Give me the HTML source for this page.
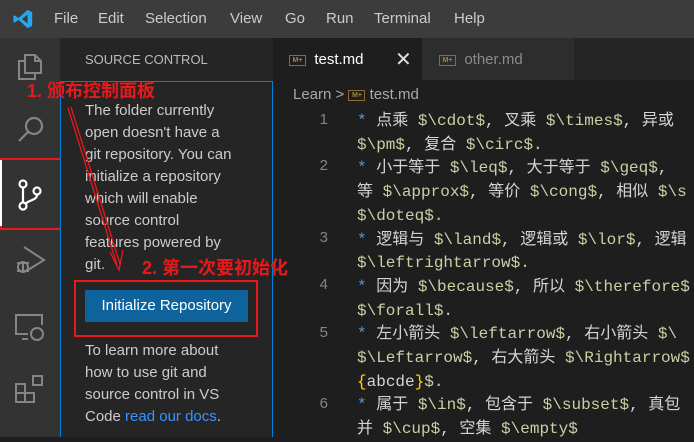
<!DOCTYPE html>
<html><head><meta charset="utf-8"><style>
*{margin:0;padding:0;box-sizing:border-box}
body{width:694px;height:437px;overflow:hidden;background:#1e1e1e;font-family:"Liberation Sans","Noto Sans CJK SC",sans-serif;position:relative}
.abs{position:absolute}
#title{left:0;top:0;width:694px;height:38px;background:#3c3c3c;color:#ccc;font-size:15px}
#title span{position:absolute;top:10px}
#act{left:0;top:38px;width:60px;height:399px;background:#333}
#side{left:60px;top:38px;width:213px;height:399px;background:#252526;color:#ccc}
.p{position:absolute;left:25px;font-size:15px;line-height:22px;color:#ccc;white-space:nowrap}
#tabs{left:273px;top:38px;width:421px;height:42px;background:#252526}
.mono{font-family:"Liberation Mono","Noto Sans CJK SC",monospace;font-size:16px;color:#d4d4d4;white-space:nowrap}
.m{color:#c5d2a3}.s{color:#569cd6}.y{color:#ffd700}
.ln{position:absolute;left:290px;width:38px;text-align:right;color:#858585;font-family:"Liberation Sans",sans-serif;font-size:15px}
.mdi{display:inline-block;width:17px;height:11px;border:1px solid #8a6c3c;color:#a5824b;font-size:7px;line-height:9px;text-align:center;font-weight:bold;vertical-align:middle}
.red{color:#e8191b;font-weight:bold;font-size:18px;font-family:"Liberation Sans","Noto Sans CJK SC",sans-serif}
</style></head><body>
<div id="title" class="abs">
<svg class="abs" style="left:12px;top:8px" width="22" height="22" viewBox="0 0 24 24"><path d="M17 2 L22 4.5 V19.5 L17 22 L7 13 L3 16 L1.5 15 V9 L3 8 L7 11 Z M17 7 L11 12 L17 17 Z" fill="#23a9f2"/></svg>
<span style="left:54px">File</span><span style="left:98px">Edit</span><span style="left:145px">Selection</span><span style="left:230px">View</span><span style="left:285px">Go</span><span style="left:326px">Run</span><span style="left:374px">Terminal</span><span style="left:454px">Help</span>
</div>
<div id="act" class="abs">
<svg class="abs" style="left:16px;top:14px" width="28" height="30" viewBox="0 0 28 30" fill="none" stroke="#858585" stroke-width="2"><path d="M9 3h10l6 6v12H9z M19 3v6h6"/><path d="M9 9H3v18h16v-6"/></svg>
<svg class="abs" style="left:16px;top:76px" width="30" height="30" viewBox="0 0 30 30" fill="none" stroke="#858585" stroke-width="2.2"><circle cx="18" cy="12" r="8"/><path d="M12 18L3 27"/></svg>
<div class="abs" style="left:0;top:120px;width:63px;height:72px;border:2px solid #e8191b"></div>
<div class="abs" style="left:0;top:122px;width:2px;height:66px;background:#fff"></div>
<svg class="abs" style="left:16px;top:140px" width="28" height="34" viewBox="0 0 28 34" fill="none" stroke="#fff" stroke-width="2.2"><circle cx="7" cy="6" r="3.5"/><circle cx="7" cy="28" r="3.5"/><circle cx="21" cy="13" r="3.5"/><path d="M7 10v14 M21 17c0 5-8 5-12 9"/></svg>
<svg class="abs" style="left:14px;top:206px" width="32" height="32" viewBox="0 0 32 32" fill="none" stroke="#858585" stroke-width="2"><path d="M10 3l20 13-16 10"/><circle cx="9" cy="23" r="5"/><path d="M3 19h12M3 27h12M9 18v10"/></svg>
<svg class="abs" style="left:14px;top:274px" width="32" height="30" viewBox="0 0 32 30" fill="none" stroke="#858585" stroke-width="2"><path d="M14 22H2V3h26v10M8 27h6"/><circle cx="23" cy="22" r="6"/></svg>
<svg class="abs" style="left:14px;top:336px" width="32" height="32" viewBox="0 0 32 32" fill="none" stroke="#858585" stroke-width="2"><rect x="2" y="10" width="9" height="9"/><rect x="2" y="19" width="9" height="9"/><rect x="11" y="19" width="9" height="9"/><rect x="19" y="2" width="9" height="9"/></svg>
</div>
<div id="side" class="abs">
<div class="abs" style="left:25px;top:14px;font-size:13px;color:#bbb">SOURCE CONTROL</div>
<div class="abs" style="left:0;top:43px;width:213px;height:356px;border:1px solid #007fd4;border-bottom:none"></div>
<div class="p" style="top:62px">The folder currently<br>open doesn't have a<br>git repository. You can<br>initialize a repository<br>which will enable<br>source control<br>features powered by<br>git.</div>
<div class="abs" style="left:14px;top:242px;width:184px;height:57px;border:2px solid #e8191b"></div>
<div class="abs" style="left:25px;top:252px;width:163px;height:32px;background:#0e639c;color:#fff;font-size:15px;text-align:center;line-height:32px">Initialize Repository</div>
<div class="p" style="top:302px">To learn more about<br>how to use git and<br>source control in VS<br>Code <span style="color:#3794ff">read our docs</span>.</div>
</div>
<div id="tabs" class="abs">
<div class="abs" style="left:0;top:0;width:149px;height:42px;background:#1e1e1e"></div>
<div class="abs" style="left:149px;top:0;width:152px;height:42px;background:#2d2d2d"></div>
<div class="abs" style="left:16px;top:13px;color:#fff;font-size:15px"><span class="mdi">M+</span> &nbsp;test.md</div>
<div class="abs" style="left:122px;top:9px;color:#ddd;font-size:20px">✕</div>
<div class="abs" style="left:166px;top:13px;color:#8b8b8b;font-size:15px"><span class="mdi">M+</span> &nbsp;other.md</div>
</div>
<div class="abs" style="left:293px;top:86px;color:#a9a9a9;font-size:15px">Learn &gt; <span class="mdi">M+</span> test.md</div>
<div class="ln" style="top:111px">1</div><div class="ln" style="top:157px">2</div><div class="ln" style="top:229px">3</div><div class="ln" style="top:276px">4</div><div class="ln" style="top:324px">5</div><div class="ln" style="top:395px">6</div>
<div class="abs mono" style="left:357px;top:110px;line-height:23.7px">
<span class="s">*</span> 点乘 <span class="m">$\cdot$</span>, 叉乘 <span class="m">$\times$</span>, 异或<br>
<span class="m">$\pm$</span>, 复合 <span class="m">$\circ$.</span><br>
<span class="s">*</span> 小于等于 <span class="m">$\leq$</span>, 大于等于 <span class="m">$\geq$</span>,<br>
等 <span class="m">$\approx$</span>, 等价 <span class="m">$\cong$</span>, 相似 <span class="m">$\s</span><br>
<span class="m">$\doteq$.</span><br>
<span class="s">*</span> 逻辑与 <span class="m">$\land$</span>, 逻辑或 <span class="m">$\lor$</span>, 逻辑<br>
<span class="m">$\leftrightarrow$.</span><br>
<span class="s">*</span> 因为 <span class="m">$\because$</span>, 所以 <span class="m">$\therefore$</span><br>
<span class="m">$\forall$.</span><br>
<span class="s">*</span> 左小箭头 <span class="m">$\leftarrow$</span>, 右小箭头 <span class="m">$\</span><br>
<span class="m">$\Leftarrow$</span>, 右大箭头 <span class="m">$\Rightarrow$</span><br>
<span class="y">{</span>abcde<span class="y">}</span><span class="m">$.</span><br>
<span class="s">*</span> 属于 <span class="m">$\in$</span>, 包含于 <span class="m">$\subset$</span>, 真包<br>
并 <span class="m">$\cup$</span>, 空集 <span class="m">$\empty$</span>
</div>
<div class="abs red" style="left:27px;top:77px">1. 颁布控制面板</div>
<div class="abs red" style="left:142px;top:254px">2. 第一次要初始化</div>
<svg class="abs" style="left:0;top:0" width="694" height="437"><g stroke="#e8191b" stroke-width="1.3" fill="none"><path d="M68 108L117 265M71 107L120 264"/><path d="M110 252L119 270L123 250"/></g></svg>
</body></html>
